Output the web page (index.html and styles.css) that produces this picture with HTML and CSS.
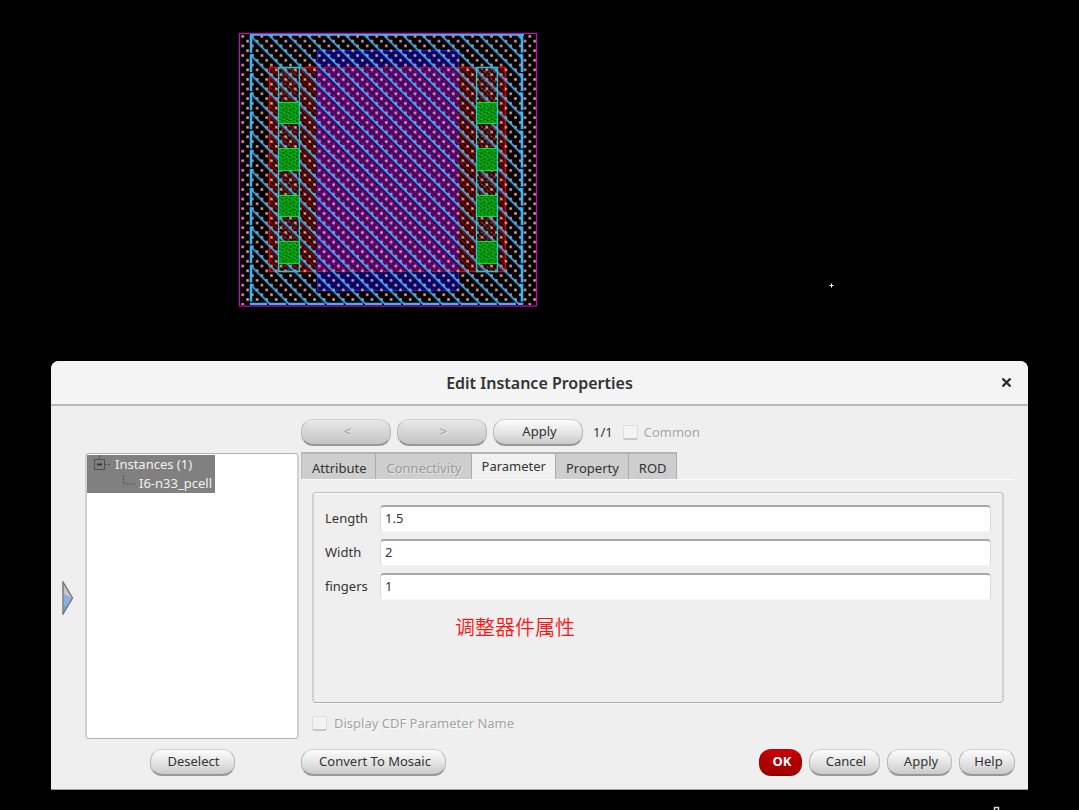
FILE: index.html
```html
<!DOCTYPE html>
<html lang="en">
<head>
<meta charset="utf-8">
<title>Edit Instance Properties</title>
<link rel="stylesheet" href="styles.css">
</head>
<body>
<main class="desktop">
  <section class="canvas" aria-label="Layout canvas">
    <svg class="device" width="300" height="276" viewBox="238 31 300 276" role="img" aria-label="n33 transistor layout">
      <defs>
        <pattern id="dots" width="9.57" height="9.57" patternUnits="userSpaceOnUse" x="241.3" y="34.9">
          <rect x="0.2" y="0.2" width="2.5" height="2.5" fill="#f4a09c"/>
          <rect x="4.985" y="4.985" width="2.5" height="2.5" fill="#f4a09c"/>
        </pattern>
        <pattern id="red" width="4.8" height="4.8" patternUnits="userSpaceOnUse" x="269" y="67">
          <path d="M-1.2-1.2 6 6M-3.6 1.2 1.2 6M3.6-1.2 6 1.2" stroke="#b40000" stroke-width="1.3"/>
        </pattern>
        <pattern id="poly" width="4.8" height="4.8" patternUnits="userSpaceOnUse" x="317" y="50">
          <path d="M-1.2 6 6-1.2M-1.2 1.2 1.2-1.2M3.6 6 6 3.6" stroke="#0808d4" stroke-width="1.4"/>
        </pattern>
        <pattern id="mix" width="4.8" height="4.8" patternUnits="userSpaceOnUse" x="317" y="50">
          <rect width="4.8" height="4.8" fill="#1c0024"/>
          <path d="M-1.2-1.2 6 6" stroke="#a80030" stroke-width="1.2"/>
          <path d="M-1.2 6 6-1.2" stroke="#280cd8" stroke-width="1.3"/>
          <rect x="1.8" y="1.8" width="1.5" height="1.5" fill="#9800b8"/>
        </pattern>
        <pattern id="metal" width="19.14" height="19.14" patternUnits="userSpaceOnUse" x="251.7" y="37">
          <path d="M-2-2 22 22M-2 17.14 2 21.14M17.14-2 22 2.86" stroke="#38a8ec" stroke-width="1.8"/>
        </pattern>
        <pattern id="speck" width="9.6" height="9.6" patternUnits="userSpaceOnUse" x="278" y="67">
          <path fill="#28a8a8" d="M1 1h1.2v1.2H1zM5 2h1.2v1.2H5zM8 4h1.2v1.2H8zM3 5h1.2v1.2H3zM6 7h1.2v1.2H6zM1 8h1.2v1.2H1z"/>
        </pattern>
        <pattern id="via" width="7.2" height="7.2" patternUnits="userSpaceOnUse" x="278" y="102">
          <rect width="7.2" height="7.2" fill="#008c08"/>
          <path fill="#00e010" d="M0 0h1.2v1.2H0zM2.4 1.2h1.2v1.2H2.4zM4.8 2.4h1.2v1.2H4.8zM1.2 3.6h1.2v1.2H1.2zM6 4.8h1.2v1.2H6zM3.6 6h1.2v1.2H3.6z"/>
          <path fill="#103c14" d="M4.8 0H6v1.2H4.8zM1.2 2.4h1.2v1.2H1.2zM3.6 3.6h1.2v1.2H3.6zM0 6h1.2v1.2H0z"/>
          <path fill="#6c8c78" d="M6 2.4h1.2v1.2H6zM2.4 4.8h1.2V6H2.4z"/>
        </pattern>
        <g id="contacts">
          <rect x="278.5" y="67.5" width="21" height="204" fill="url(#speck)"/>
          <g fill="url(#via)" stroke="#00e820">
            <rect x="278.5" y="102.5" width="21" height="21"/>
            <rect x="278.5" y="148.5" width="21" height="22"/>
            <rect x="278.5" y="195.5" width="21" height="21"/>
            <rect x="278.5" y="241.5" width="21" height="22"/>
          </g>
        </g>
      </defs>
      <rect x="269.5" y="67.5" width="236" height="204" fill="url(#red)" stroke="#e40000" stroke-width="1.400"/>
      <rect x="317.5" y="50" width="141.500" height="240" fill="#00001c"/>
      <rect x="317.5" y="50.500" width="141" height="240" fill="url(#poly)" stroke="#1c20e4"/>
      <rect x="318" y="67" width="141" height="205" fill="url(#mix)"/>
      <path d="M318 67.5H459M318 271.500H459" stroke="#d80030" stroke-dasharray="4 2"/>
      <rect x="240" y="34" width="296" height="271" fill="url(#dots)"/>
      <rect x="251" y="35" width="272" height="269" fill="url(#metal)"/>
      <use href="#contacts"/>
      <use href="#contacts" x="198"/>
      <path d="M278.5 67.5h21v204h-21zM476.500 67.5h21v204h-21z" fill="none" stroke="#20c8d8" stroke-width="1.300"/>
      <path d="M250 34.700H524" stroke="#4ab4f8" stroke-width="2"/>
      <path d="M251 35V304M522 35V304" stroke="#38b4f8" stroke-width="2.600" stroke-dasharray="17.740 1.400"/>
      <path d="M250 303.800H523" stroke="#38b4f8" stroke-width="2.200" stroke-dasharray="17.140 2"/>
      <rect x="239.500" y="33.500" width="297" height="272.500" fill="none" stroke="#c808c8" stroke-width="1.200"/>
    </svg>
    <svg class="crosshair" width="5" height="5" viewBox="0 0 5 5" aria-hidden="true"><path d="M2.500 .5v4M.5 2.500h4" stroke="#fff"/></svg>
  </section>

  <section class="dialog" role="dialog" aria-labelledby="dialog-title">
    <header class="titlebar">
      <h1 class="title" id="dialog-title">Edit Instance Properties</h1>
      <button class="close" type="button" aria-label="Close">
        <svg width="11" height="11" viewBox="0 0 11 11"><path d="M1.500 1.500 9.500 9.500M9.500 1.500 1.500 9.500" stroke="#2e2a2c" stroke-width="2.400"/></svg>
      </button>
    </header>
    <form class="content">
      <button class="expander" type="button" aria-label="Expand panel">
        <svg width="12" height="34" viewBox="0 0 12 34"><path d="M1 1v32l9.500-16z" fill="#c8c8cc"/><path d="M2 13 10 17 2 30z" fill="#8cb0dc"/><path d="M2 25h3l-3 5z" fill="#50b8c8"/><path d="M1 1v32l9.500-16z" fill="none" stroke="#77727a" stroke-width="1.400"/></svg>
      </button>
      <div class="side">
        <div class="tree">
          <ul class="tree-selection">
            <li class="tree-root"><svg width="22" height="19" viewBox="0 0 22 19" aria-hidden="true"><path d="M8.500 0v4" stroke="#555"/><rect x="3.500" y="4.500" width="10" height="10" fill="none" stroke="#505050"/><path d="M6 9.500h5" stroke="#333" stroke-width="2"/><path d="M14 9.500h6" stroke="#505458" stroke-dasharray="2 1"/></svg>Instances (1)</li>
            <li class="tree-child"><svg width="14" height="19" viewBox="0 0 14 19" aria-hidden="true"><path d="M.5 1v9H13" fill="none" stroke="#505860" stroke-dasharray="2 1"/></svg>I6-n33_pcell</li>
          </ul>
        </div>
        <button class="btn deselect" type="button">Deselect</button>
      </div>
      <div class="main">
        <div class="toolbar">
          <button class="btn nav" type="button" disabled>&lt;</button>
          <button class="btn nav" type="button" disabled>&gt;</button>
          <button class="btn nav" type="button">Apply</button>
          <span class="count">1/1</span>
          <input class="check" type="checkbox" id="common" disabled>
          <label class="muted" for="common">Common</label>
        </div>
        <div class="tabs" role="tablist">
          <button class="tab" type="button" role="tab">Attribute</button>
          <button class="tab" type="button" role="tab" disabled>Connectivity</button>
          <button class="tab active" type="button" role="tab" aria-selected="true">Parameter</button>
          <button class="tab" type="button" role="tab">Property</button>
          <button class="tab" type="button" role="tab">ROD</button>
        </div>
        <div class="panel" role="tabpanel">
          <div class="group">
            <div class="fields">
              <label for="length">Length</label><input class="text" id="length" type="text" value="1.5">
              <label for="width">Width</label><input class="text" id="width" type="text" value="2">
              <label for="fingers">fingers</label><input class="text" id="fingers" type="text" value="1">
            </div>
            <p class="note" lang="zh">调整器件属性</p>
          </div>
          <div class="display-row">
            <input class="check" type="checkbox" id="cdf" disabled>
            <label class="muted" for="cdf">Display CDF Parameter Name</label>
          </div>
        </div>
        <footer class="actions">
          <button class="btn mosaic" type="button">Convert To Mosaic</button>
          <button class="btn primary" type="submit">OK</button>
          <button class="btn cancel" type="button">Cancel</button>
          <button class="btn apply" type="button">Apply</button>
          <button class="btn help" type="button">Help</button>
        </footer>
      </div>
    </form>
  </section>
  <div class="below"><svg width="7" height="6" viewBox="0 0 7 6" aria-hidden="true"><path d="M1.500 6V1.500h4V6" fill="none" stroke="#ddd6d0" stroke-width="1.500"/></svg></div>
</main>
</body>
</html>
```
FILE: styles.css
```css
* { box-sizing: border-box; }

body {
  margin: 0;
  background: #000;
  color: #333;
  font: 13px/19px "Noto Sans", "Open Sans", sans-serif;
}

button, input { font: inherit; color: inherit; margin: 0; }
button { cursor: pointer; }

.desktop { min-height: 100vh; overflow: hidden; }

.canvas { position: relative; height: 361px; padding: 31px 0 0 238px; }
.device { display: block; }
.crosshair { position: absolute; left: 829px; top: 283px; }

.dialog {
  margin: 0 51px;
  background: #efefef;
  border-radius: 8px 8px 0 0;
  border-bottom: 1px solid #999;
}

.titlebar {
  display: grid;
  grid-template-columns: 1fr auto 1fr;
  align-items: center;
  height: 45px;
  padding: 0 16px;
  background: #f4f4f4;
  border-bottom: 2px solid #b8b8b8;
  border-radius: 8px 8px 0 0;
}
.title { grid-column: 2; margin: 0; font-size: 16px; line-height: 22px; font-weight: 600; }
.close { justify-self: end; display: flex; padding: 0; border: 0; background: none; }

.content { display: flex; padding: 13px 13px 13px 0; }

.expander {
  flex: none;
  width: 34px;
  padding: 0 0 0 11px;
  border: 0;
  background: none;
  display: flex;
  align-items: center;
}

.side {
  flex: none;
  width: 214px;
  display: flex;
  flex-direction: column;
  align-items: center;
  padding-top: 34px;
}
.tree {
  width: 100%;
  flex: 1;
  margin-bottom: 10px;
  padding: 1px 0;
  background: #fff;
  border: 1px solid #b4b4b4;
  border-left: 2px solid #d0d0d0;
  border-right: 2px solid #d0d0d0;
  border-radius: 4px;
}
.tree-selection {
  display: inline-block;
  margin: 0;
  padding: 0;
  list-style: none;
  width: 128px;
  background: #808080;
  color: #f0f0f0;
}
.tree-selection li { display: flex; height: 19px; white-space: nowrap; }
.tree-root { gap: 2px; padding-left: 4px; }
.tree-child { gap: 2px; padding-left: 36px; }

.btn {
  height: 27px;
  padding: 0 0 1px 3px;
  border: 1px solid #b8b8b8;
  border-top-color: #d0d0d0;
  border-bottom: 2px solid #999;
  border-radius: 12px;
  background: linear-gradient(#fcfcfc, #e6e6e6 50%, #cacaca);
}
.btn:disabled { color: #999; background: linear-gradient(#e8e8e8, #c4c4c4); text-shadow: 1px 1px #e8e8e8; }
.deselect { width: 85px; }
.nav { width: 90px; }
.mosaic { width: 145px; margin-right: auto; }
.cancel { width: 71px; }
.apply { width: 65px; }
.help { width: 56px; }
.primary {
  width: 43px;
  color: #fff;
  font-weight: 700;
  border-color: #c40010 #a80000 #8c0000;
  background: linear-gradient(#d00008, #b00000 30%, #a60000);
}

.main { flex: 1; min-width: 0; padding-left: 2px; }

.toolbar { display: flex; align-items: center; gap: 6px; }
.count { margin: 0 4px; }
.muted { color: #a4a4a4; text-shadow: 1px 1px #fafafa; }
.check {
  appearance: none;
  width: 15px;
  height: 15px;
  border: 1px solid #dcdcdc;
  border-bottom: 2px solid #c8c8c8;
  border-radius: 2px;
  background: #f3f3f3;
}

.tabs { display: flex; margin-top: 6px; border-bottom: 1px solid #fafafa; }
.tab {
  height: 27px;
  padding: 3px 9px 0 10px;
  border: 0;
  border-top: 2px solid #b4b4b4;
  border-right: 1px solid #acacac;
  background: #cecece;
}
.tab:first-child { border-left: 1px solid #b8b8b8; }
.tab:disabled { color: #999; text-shadow: 1px 1px #e8e8e8; }
.tab.active { background: #f1f1f1; padding-top: 0; }

.panel { padding: 12px 11px 0 11px; }
.group {
  min-height: 211px;
  padding: 12px 11px;
  border: 1px solid #c0c0c0;
  border-left: 2px solid #d0d0d0;
  border-right: 2px solid #d0d0d0;
  border-bottom-color: #b0b0b0;
  border-radius: 4px;
  box-shadow: 0 1px #fafafa, inset 0 1px #fafafa;
}
.fields { display: grid; grid-template-columns: 43px 1fr; column-gap: 12px; row-gap: 7px; align-items: center; }
.text {
  width: 100%;
  height: 27px;
  padding: 0 4px 2px;
  border: 1px solid #d8d8d8;
  border-top: 2px solid #a8a8a8;
  border-bottom-color: #f6f6f6;
  border-radius: 4px;
  background: #fff;
}
.note {
  margin: 14px 0 0 130px;
  color: #ff1414;
  font: 350 20px/26px "Noto Sans CJK SC", sans-serif;
}
.display-row { display: flex; align-items: center; gap: 7px; margin-top: 11px; }

.actions { display: flex; gap: 7px; margin-top: 16px; }

.below { display: flex; justify-content: flex-end; padding: 16px 79px 0 0; }
.below svg { display: block; }
```
